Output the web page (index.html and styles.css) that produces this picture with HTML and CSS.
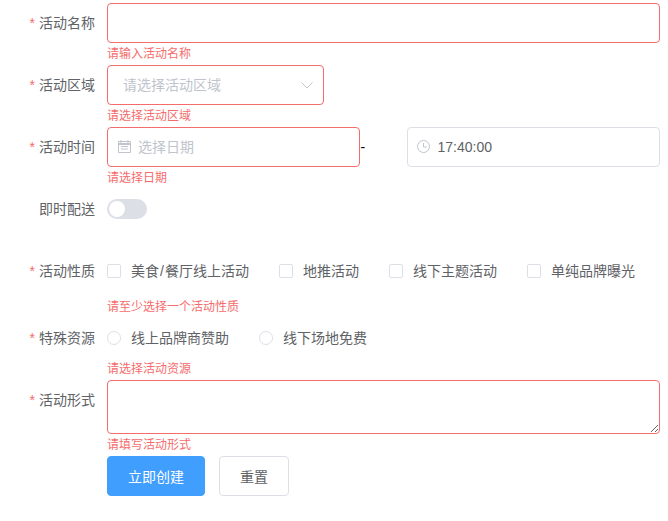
FILE: index.html
```html
<!DOCTYPE html>
<html lang="en">
<head>
    <meta charset="UTF-8">
    <title>活动表单</title>
    <link rel="stylesheet" href="styles.css">
</head>
<body>
<form class="form">
    <div class="item is-required has-error">
        <label class="label">活动名称</label>
        <div class="content">
            <input type="text" class="input">
            <div class="error">请输入活动名称</div>
        </div>
    </div>

    <div class="item is-required has-error">
        <label class="label">活动区域</label>
        <div class="content">
            <div class="select">
                <input type="text" class="input" placeholder="请选择活动区域" readonly>
                <svg class="arrow" viewBox="0 0 14 14"><path d="M1.500 4.500 7 10l5.500-5.500" fill="none" stroke="#c0c4cc" stroke-width="1"/></svg>
            </div>
            <div class="error">请选择活动区域</div>
        </div>
    </div>

    <div class="item is-required has-error">
        <label class="label">活动时间</label>
        <div class="content time-row">
            <div class="col-side">
                <div class="picker">
                    <svg class="prefix date-icon" viewBox="0 0 13 13"><path d="M.5 1.500h12v11H.5zM.5 4.500h12M.5 3.500h12M3 6.500h7M3 9h7M3 0v3M10 0v3" fill="none" stroke="#c0c4cc" stroke-width="1"/></svg>
                    <input type="text" class="input with-prefix" placeholder="选择日期">
                </div>
                <div class="error">请选择日期</div>
            </div>
            <div class="col-line">-</div>
            <div class="col-side plain">
                <div class="picker">
                    <svg class="prefix" viewBox="0 0 13 13"><circle cx="6.500" cy="6.500" r="6" fill="none" stroke="#c0c4cc" stroke-width="1"/><path d="M6.500 3v4h3" fill="none" stroke="#c0c4cc" stroke-width="1"/></svg>
                    <input type="text" class="input with-prefix" value="17:40:00">
                </div>
            </div>
        </div>
    </div>

    <div class="item">
        <label class="label">即时配送</label>
        <div class="content switch-box">
            <span class="switch"></span>
        </div>
    </div>

    <div class="item is-required has-error tall">
        <label class="label">活动性质</label>
        <div class="content">
            <div class="options">
                <label class="option"><span class="checkbox"></span><span>美食<span class="slash">/</span>餐厅线上活动</span></label>
                <label class="option"><span class="checkbox"></span>地推活动</label>
                <label class="option"><span class="checkbox"></span>线下主题活动</label>
                <label class="option"><span class="checkbox"></span>单纯品牌曝光</label>
            </div>
            <div class="error">请至少选择一个活动性质</div>
        </div>
    </div>

    <div class="item is-required has-error">
        <label class="label">特殊资源</label>
        <div class="content">
            <div class="options">
                <label class="option"><span class="radio"></span>线上品牌商赞助</label>
                <label class="option"><span class="radio"></span>线下场地免费</label>
            </div>
            <div class="error">请选择活动资源</div>
        </div>
    </div>

    <div class="item is-required has-error">
        <label class="label">活动形式</label>
        <div class="content">
            <textarea class="textarea"></textarea>
            <div class="error">请填写活动形式</div>
        </div>
    </div>

    <div class="item">
        <div class="label"></div>
        <div class="content buttons">
            <button type="button" class="btn btn-primary">立即创建</button>
            <button type="button" class="btn">重置</button>
        </div>
    </div>
</form>
</body>
</html>
```

FILE: styles.css
```css
* {margin: 0;padding: 0;box-sizing: border-box;}

body {
    background-color: #fff;
    color: #606266;
    font-family: "Liberation Sans", "Noto Sans CJK SC", sans-serif;
    font-size: 14px;
}

.form {
    padding: 3px 8px 0 0;
}

.item {
    display: flex;
    margin-bottom: 22px;
}
.item.tall .content {
    padding-bottom: 5px;
}

.label {
    flex: none;
    width: 107px;
    padding-right: 12px;
    line-height: 40px;
    text-align: right;
}
.is-required .label:before {
    content: "*";
    margin-right: 4px;
    color: #f56c6c;
}

.content {
    position: relative;
    flex: 1;
    min-width: 0;
    line-height: 40px;
}

.error {
    position: absolute;
    top: 100%;
    left: 0;
    padding-top: 5px;
    color: #f56c6c;
    font-size: 12px;
    line-height: 1;
}

.input {
    display: block;
    width: 100%;
    height: 40px;
    padding: 0 15px;
    border: 1px solid #dcdfe6;
    border-radius: 4px;
    outline: none;
    background-color: #fff;
    color: #606266;
    font: inherit;
}
.input::placeholder {
    color: #c0c4cc;
}
.has-error .input {
    border-color: #f56c6c;
}
.plain .input {
    border-color: #dcdfe6;
}
.input.with-prefix {
    padding-left: 30px;
}

.select {
    position: relative;
    width: 217px;
}
.arrow {
    position: absolute;
    top: 13px;
    right: 10px;
    width: 14px;
    height: 14px;
}

.time-row {
    display: flex;
}
.col-side {
    position: relative;
    flex: none;
    width: 45.8333%;
}
.col-line {
    flex: none;
    width: 8.3333%;
    color: #000;
}
.picker {
    position: relative;
}
.prefix {
    position: absolute;
    top: 13px;
    left: 10px;
    width: 13px;
    height: 13px;
}
.date-icon {
    left: 11px;
}

.switch-box {
    display: flex;
    align-items: center;
    height: 40px;
}
.switch {
    position: relative;
    width: 40px;
    height: 20px;
    border-radius: 10px;
    background-color: #dcdfe6;
}
.switch:after {
    content: "";
    position: absolute;
    top: 2px;
    left: 2px;
    width: 16px;
    height: 16px;
    border-radius: 50%;
    background-color: #fff;
}

.options {
    display: flex;
    gap: 30px;
}
.option {
    display: flex;
    align-items: center;
    gap: 10px;
    height: 40px;
}
.slash {
    padding: 0 1px;
}
.checkbox,
.radio {
    flex: none;
    width: 14px;
    height: 14px;
    border: 1px solid #dcdfe6;
    background-color: #fff;
}
.checkbox {
    border-radius: 2px;
}
.radio {
    border-radius: 50%;
}

.textarea {
    display: block;
    width: 100%;
    height: 54px;
    padding: 5px 15px;
    border: 1px solid #f56c6c;
    border-radius: 4px;
    outline: none;
    color: #606266;
    font: inherit;
    resize: vertical;
}

.buttons {
    display: flex;
    gap: 14px;
}
.btn {
    height: 40px;
    padding: 0 20px;
    border: 1px solid #dcdfe6;
    border-radius: 4px;
    background-color: #fff;
    color: #606266;
    font: inherit;
}
.btn-primary {
    border-color: #409eff;
    background-color: #409eff;
    color: #fff;
}
```
